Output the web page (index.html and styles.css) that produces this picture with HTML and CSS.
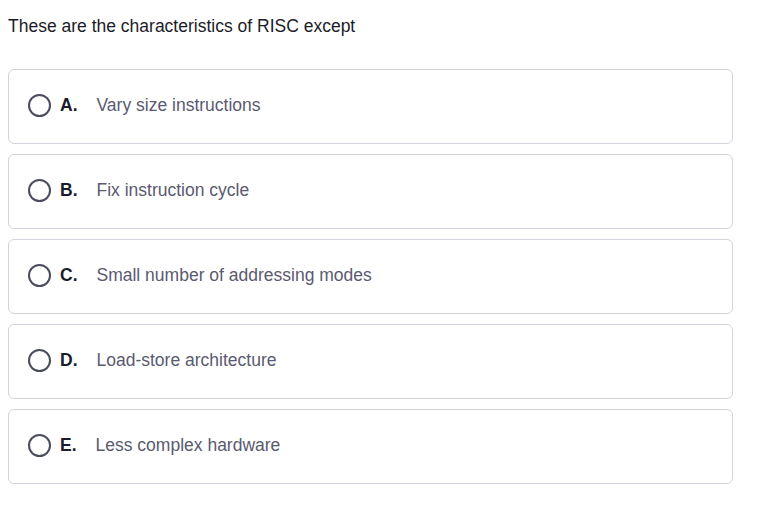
FILE: index.html
```html
<!DOCTYPE html>
<html>
<head>
<meta charset="utf-8">
<link rel="stylesheet" href="styles.css">
</head>
<body>
<div class="quiz">
  <p class="question">These are the characteristics of RISC except</p>
  <div class="options">
    <label class="option"><span class="radio"></span><span class="letter">A.</span><span class="text">Vary size instructions</span></label>
    <label class="option"><span class="radio"></span><span class="letter">B.</span><span class="text">Fix instruction cycle</span></label>
    <label class="option"><span class="radio"></span><span class="letter">C.</span><span class="text">Small number of addressing modes</span></label>
    <label class="option"><span class="radio"></span><span class="letter">D.</span><span class="text">Load-store architecture</span></label>
    <label class="option"><span class="radio"></span><span class="letter">E.</span><span class="text">Less complex hardware</span></label>
  </div>
</div>
</body>
</html>
```

FILE: styles.css
```css
html, body {
  margin: 0;
  padding: 0;
  background: #ffffff;
}
body {
  font-family: "Liberation Sans", Arial, sans-serif;
}
.quiz {
  padding: 0 28px 0 8px;
}
.question {
  margin: 0;
  padding-top: 14px;
  font-size: 17.5px;
  line-height: 24px;
  color: #1c1c28;
  height: 69px;
  box-sizing: border-box;
}
.options {
  display: flex;
  flex-direction: column;
  gap: 10px;
}
.option {
  display: flex;
  align-items: center;
  height: 75px;
  box-sizing: border-box;
  border: 1px solid #d3d3db;
  border-radius: 6px;
  padding-left: 19px;
  padding-bottom: 3px;
  font-size: 17.5px;
}
.radio {
  width: 23px;
  height: 23px;
  box-sizing: border-box;
  border: 2.6px solid #4b4d5c;
  border-radius: 50%;
  flex: none;
  margin-right: 9px;
}
.letter {
  font-weight: bold;
  color: #1a1b2b;
  margin-right: 19px;
}
.text {
  color: #5a5a70;
}
```
